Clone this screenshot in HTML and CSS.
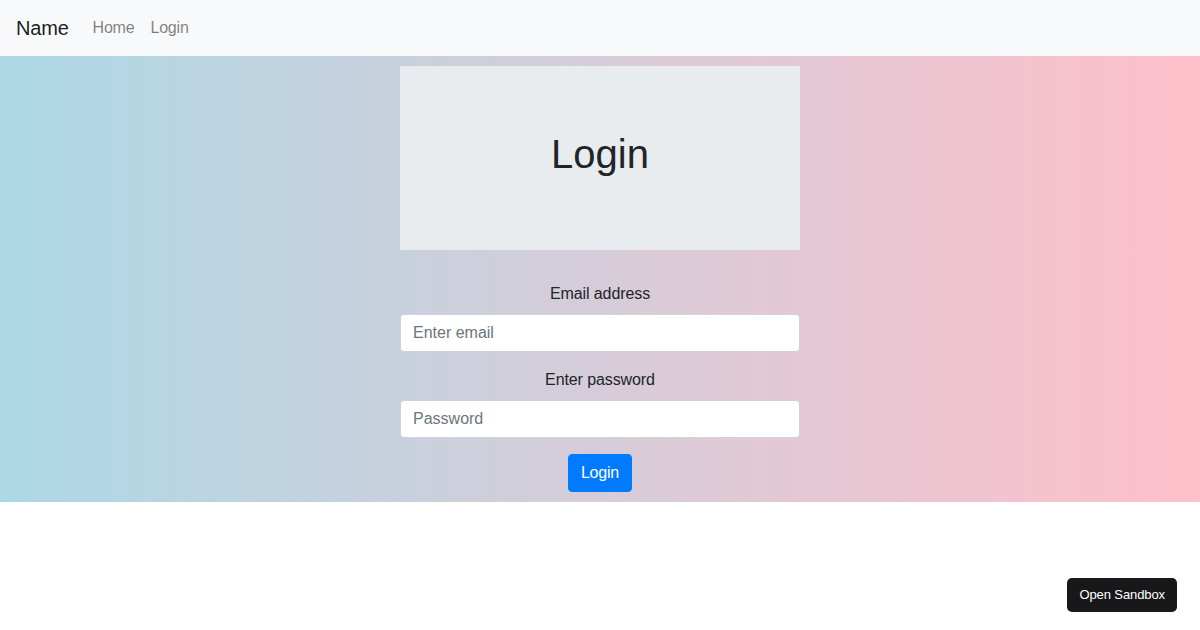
FILE: index.html
```html
<!DOCTYPE html>
<html>
<head>
<meta charset="utf-8">
<link rel="stylesheet" href="styles.css">
</head>
<body>
<nav class="navbar">
  <a class="brand" href="#">Name</a>
  <ul class="nav">
    <li><a class="nav-link" href="#">Home</a></li>
    <li><a class="nav-link" href="#">Login</a></li>
  </ul>
</nav>
<main class="hero">
  <div class="container">
    <div class="jumbotron"><h1>Login</h1></div>
    <form class="form">
      <div class="form-group">
        <label for="email">Email address</label>
        <input id="email" type="email" placeholder="Enter email">
      </div>
      <div class="form-group">
        <label for="pw">Enter password</label>
        <input id="pw" type="password" placeholder="Password">
      </div>
      <button type="button" class="btn">Login</button>
    </form>
  </div>
</main>
<a class="sandbox" href="#">Open Sandbox</a>
</body>
</html>
```
FILE: styles.css
```css
* { box-sizing: border-box; }
html, body { margin: 0; }
body {
  font-family: "Liberation Sans", Arial, sans-serif;
  font-size: 16px;
  line-height: 1.5;
  color: #212529;
  background: #fff;
}
a { text-decoration: none; }
.navbar {
  display: flex;
  align-items: center;
  height: 56px;
  padding: 8px 16px;
  background: #f8f9fa;
}
.brand {
  font-size: 20px;
  line-height: 30px;
  padding: 5px 0;
  margin-right: 16px;
  color: rgba(0,0,0,.9);
  letter-spacing: -0.2px;
}
.nav { display: flex; list-style: none; margin: 0; padding: 0; }
.nav-link { display: block; padding: 8px; color: rgba(0,0,0,.5); letter-spacing: -0.2px; }
.hero {
  background: linear-gradient(to right, lightblue, pink);
  padding: 10px 0;
}
.container { width: 400px; margin: 0 auto; }
.jumbotron {
  background: #e9ecef;
  padding: 64px 32px;
  margin-bottom: 32px;
  text-align: center;
}
.jumbotron h1 {
  margin: 0 0 8px;
  font-size: 40px;
  font-weight: 500;
  line-height: 1.2;
}
.form { display: flex; flex-direction: column; align-items: center; }
.form-group { width: 100%; margin-bottom: 16px; text-align: center; }
label { display: block; margin-bottom: 8px; letter-spacing: -0.1px; }
input {
  display: block;
  width: 100%;
  height: 38px;
  padding: 6px 12px;
  font: inherit;
  color: #495057;
  background: #fff;
  border: 1px solid #ced4da;
  border-radius: 4px;
}
input::placeholder { color: #6c757d; opacity: 1; }
.btn {
  font: inherit;
  line-height: 1.5;
  color: #fff;
  background: #007bff;
  border: 1px solid #007bff;
  border-radius: 4px;
  padding: 6px 12px;
  letter-spacing: -0.2px;
}
.sandbox {
  position: fixed;
  right: 23px;
  bottom: 18px;
  background: #18181b;
  color: #fff;
  font-size: 13px;
  line-height: 16px;
  padding: 9px 12px;
  border-radius: 5px;
  letter-spacing: -0.1px;
}
```
